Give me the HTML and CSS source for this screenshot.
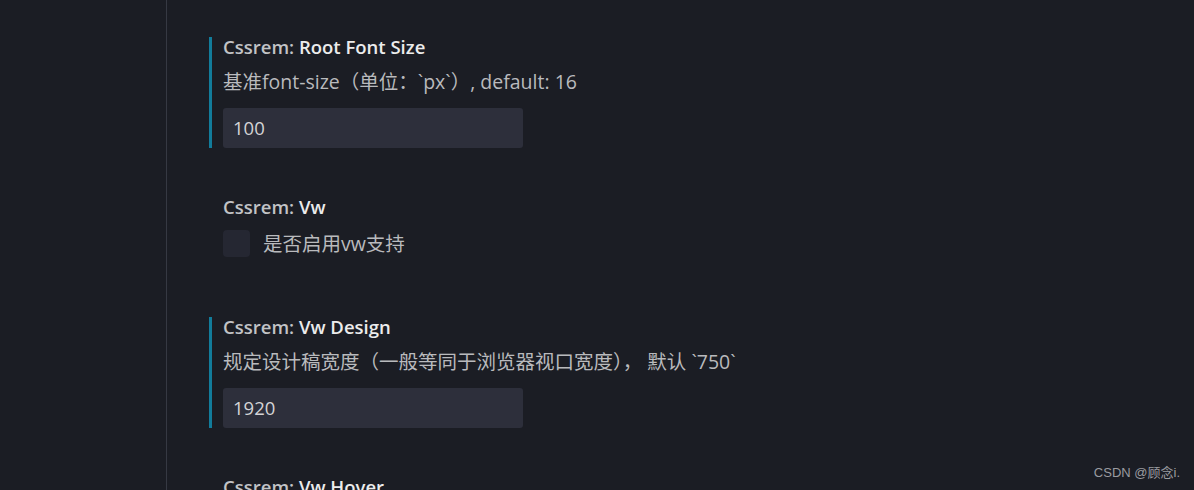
FILE: index.html
```html
<!DOCTYPE html>
<html lang="zh-CN">
<head>
<meta charset="utf-8">
<title>Settings</title>
<link rel="stylesheet" href="styles.css">
</head>
<body>
<div class="editor">
  <div class="sidebar"></div>
  <div class="settings">
    <div class="setting modified">
      <div class="title"><span class="cat">Cssrem: </span><span class="name">Root Font Size</span></div>
      <div class="desc">基准font-size（单位：`px`）, default: 16</div>
      <div class="input">100</div>
    </div>
    <div class="setting bool">
      <div class="title"><span class="cat">Cssrem: </span><span class="name">Vw</span></div>
      <div class="check-row"><span class="checkbox"></span><span class="desc">是否启用vw支持</span></div>
    </div>
    <div class="setting modified">
      <div class="title"><span class="cat">Cssrem: </span><span class="name">Vw Design</span></div>
      <div class="desc">规定设计稿宽度（一般等同于浏览器视口宽度）， 默认 `750`</div>
      <div class="input">1920</div>
    </div>
    <div class="setting">
      <div class="title"><span class="cat">Cssrem: </span><span class="name">Vw Hover</span></div>
    </div>
  </div>
</div>
<div class="watermark">CSDN @顾念i.</div>
</body>
</html>
```

FILE: styles.css
```css
html, body {
  margin: 0;
  padding: 0;
  background: #1b1d24;
  height: 100%;
  overflow: hidden;
}
body {
  font-family: "Open Sans", "Noto Sans CJK SC", sans-serif;
  color: #c4c4c4;
}
.editor {
  display: flex;
  height: 490px;
}
.sidebar {
  width: 166px;
  border-right: 1px solid #363943;
  flex: none;
}
.settings {
  padding-top: 37px;
  padding-left: 42px;
  display: flex;
  flex-direction: column;
}
.setting {
  border-left: 3px solid transparent;
  padding-left: 11px;
  margin-bottom: 49px;
}
.setting.modified {
  border-left-color: #127c9b;
}
.setting.bool {
  margin-bottom: 60px;
}
.title {
  font-size: 18.5px;
  font-weight: 600;
  line-height: 20px;
  height: 20px;
}
.cat {
  color: #c2c3c6;
}
.name {
  color: #ececec;
}
.desc {
  font-size: 19.5px;
  line-height: 24px;
  color: #b9babd;
  margin-top: 13px;
}
.setting.bool .title {
  margin-bottom: 13px;
}
.input {
  margin-top: 14px;
  width: 290px;
  height: 40px;
  padding-left: 10px;
  box-sizing: content-box;
  background: #2d2f3b;
  border-radius: 3px;
  font-size: 18.5px;
  line-height: 40px;
  color: #d4d4d6;
}
.check-row {
  display: flex;
  align-items: center;
  gap: 13px;
  height: 27px;
}
.checkbox {
  width: 27px;
  height: 27px;
  background: #252732;
  border-radius: 4px;
  flex: none;
}
.check-row .desc {
  margin-top: 0;
}
.watermark {
  position: absolute;
  right: 14px;
  bottom: 9px;
  font-family: "Liberation Sans", "Noto Sans CJK SC", sans-serif;
  font-size: 13px;
  color: #9a9ba0;
}
```
